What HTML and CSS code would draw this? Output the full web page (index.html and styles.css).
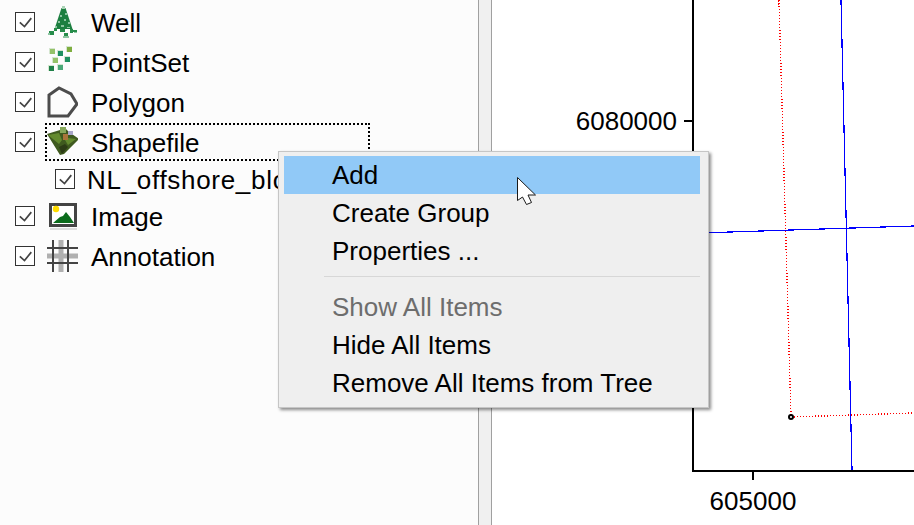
FILE: index.html
```html
<!DOCTYPE html>
<html lang="en">
<head>
<meta charset="utf-8">
<title>Tree context menu</title>
<link rel="stylesheet" href="styles.css">
</head>
<body>
<div class="app">
  <aside class="tree">
    <div class="row">
      <span class="check"><svg viewBox="0 0 20 20"><path d="M4.500 11l5.500 5 8-10"/></svg></span>
      <svg class="icon" viewBox="46 5 32 36">
        <path d="M61.500 8h4l7 21h-18z" fill="#1c7f40"/>
        <path d="M62 6h3v3h-3z" fill="#a9d3b5"/>
        <path d="M60 15h2v2h-2zM65 13h2v2h-2zM58 21h2v2h-2zM64 19h2v2h-2zM68 22h2v2h-2zM61 25h3v2h-3zM55 26h2v2h-2zM67 27h3v1h-3z" fill="#8cc5a0"/>
        <path d="M49 31h5v4h-5zM54 28h3v3h-3zM60 29h5v3h-5zM64 33h4v4h-4zM70 29h3v4h-3zM73 30h4v2h-4z" fill="#268c4a"/>
        <path d="M48 33h2v2h-2zM63 36h6v2h-6zM74 32h3v1h-3z" fill="#8cc5a0"/>
      </svg>
      <span class="label">Well</span>
    </div>
    <div class="row">
      <span class="check"><svg viewBox="0 0 20 20"><path d="M4.500 11l5.500 5 8-10"/></svg></span>
      <svg class="icon" viewBox="46 45 32 36">
        <path d="M49 48h6v6h-6zM66 46h6v6h-6zM52 57h6v6h-6zM57 50h6v6h-6zM64 56h6v6h-6zM48 65h6v6h-6zM57 64h6v6h-6z" fill="#d5e6d0"/>
        <path d="M50 49h5v5h-5zM53 58h5v5h-5z" fill="#95c268"/>
        <path d="M67 47h5v5h-5z" fill="#7fae3f"/>
        <path d="M58 51h5v5h-5zM65 57h5v5h-5z" fill="#1f9060"/>
        <path d="M49 66h5v5h-5z" fill="#1f8048"/>
        <path d="M58 65h5v5h-5z" fill="#4aa878"/>
      </svg>
      <span class="label">PointSet</span>
    </div>
    <div class="row">
      <span class="check"><svg viewBox="0 0 20 20"><path d="M4.500 11l5.500 5 8-10"/></svg></span>
      <svg class="icon" viewBox="46 85 32 36">
        <path d="M59 88L49 95v21h19l9-12-6-10z" fill="none" stroke="#4c4c4c" stroke-width="3"/>
      </svg>
      <span class="label">Polygon</span>
    </div>
    <div class="row">
      <span class="check"><svg viewBox="0 0 20 20"><path d="M4.500 11l5.500 5 8-10"/></svg></span>
      <svg class="icon" viewBox="46 125 32 36">
        <path d="M47 134l13-4 4-3 5 5 10 7-15 15-4 1z" fill="#3f5a1f"/>
        <path d="M48 135l11-2 3 7-3 4zM68 138l8 1-8 6-3-5z" fill="#638a2e"/>
        <path d="M59 147l6-3 3 3-6 7z" fill="#2c3c16"/>
        <path d="M60 127h6v6h-6z" fill="#86a85a"/>
        <path d="M63 134h5v6h-5z" fill="#a9743a"/>
        <path d="M68 131h5v4h-5z" fill="#a9a6c8"/>
      </svg>
      <span class="label">Shapefile</span>
      <span class="focus"></span>
    </div>
    <div class="row row-child">
      <span class="check"><svg viewBox="0 0 20 20"><path d="M4.500 11l5.500 5 8-10"/></svg></span>
      <span class="label">NL_offshore_blocks</span>
    </div>
    <div class="row">
      <span class="check"><svg viewBox="0 0 20 20"><path d="M4.500 11l5.500 5 8-10"/></svg></span>
      <svg class="icon" viewBox="46 199 32 36">
        <path d="M50 228h27v2H50z" fill="#ddd"/>
        <path d="M50.500 204.500h25v21h-25z" fill="#fff" stroke="#444" stroke-width="3"/>
        <circle cx="56" cy="209" r="3.200" fill="#ffdc00"/>
        <path d="M53 223l7-6 3-1 3-4 4 5 4 6z" fill="#0b6b1c"/>
      </svg>
      <span class="label">Image</span>
    </div>
    <div class="row">
      <span class="check"><svg viewBox="0 0 20 20"><path d="M4.500 11l5.500 5 8-10"/></svg></span>
      <svg class="icon" viewBox="46 239 32 36">
        <path d="M47 253.500h32v5H47zM58.500 240h5v32h-5z" fill="#b0b0b0"/>
        <path d="M47 247h32v2H47zM47 262h32v2H47zM52 240h2v32h-2zM67 240h2v32h-2z" fill="#444"/>
      </svg>
      <span class="label">Annotation</span>
    </div>
  </aside>
  <div class="splitter"></div>
  <main class="plot">
    <svg class="chart" viewBox="492 0 422 525">
      <path class="axis" d="M693 0V471H914M684 121H693M753 471V480"/>
      <path class="road" d="M841 0L852 470M700 233L914 226"/>
      <path class="block" d="M779 0L791 417L914 413"/>
      <circle cx="791" cy="417" r="2" fill="#fff" stroke="#000" stroke-width="2"/>
      <text class="tick" x="677" y="130" text-anchor="end">6080000</text>
      <text class="tick" x="753" y="510" text-anchor="middle">605000</text>
    </svg>
  </main>
  <nav class="menu">
    <div class="item item-active">Add</div>
    <div class="item">Create Group</div>
    <div class="item">Properties ...</div>
    <div class="sep"></div>
    <div class="item item-disabled">Show All Items</div>
    <div class="item">Hide All Items</div>
    <div class="item">Remove All Items from Tree</div>
  </nav>
  <svg class="cursor" viewBox="0 0 20 28"><path d="M.5.500V23.500L5.500 20l4 7.500 5-2-3.500-7.500h7.500z" fill="#fff" stroke="#1a1a1a" stroke-width="1"/></svg>
</div>
</body>
</html>
```
FILE: styles.css
```css
* { box-sizing: border-box; }
html, body { margin: 0; height: 100%; overflow: hidden; background: #fff; }
body { font-family: "Liberation Sans", Arial, sans-serif; font-size: 26px; color: #000; }
.app { position: relative; display: flex; width: 914px; height: 525px; overflow: hidden; }

.tree { width: 478px; flex: none; padding-top: 3px; background: #fcfcfc; }
.row { position: relative; display: flex; align-items: center; height: 40px; padding-left: 15px; white-space: nowrap; }
.row-child { height: 34px; padding-left: 55px; }
.check { display: block; flex: none; width: 20px; height: 20px; margin-top: -2px; border: 1.500px solid #333; background: #fff; }
.check svg { display: block; width: 17px; height: 17px; fill: none; stroke: #444; stroke-width: 2; }
.icon { flex: none; width: 32px; height: 36px; margin-left: 11px; margin-right: 13px; }
.label { line-height: 1; }
.row-child .label { margin-left: 12px; letter-spacing: .7px; }
.focus {
  position: absolute; left: 45px; top: 0; width: 325px; height: 38px;
  background:
    repeating-linear-gradient(90deg, #000 0 2px, transparent 2px 4px) 0 0 / 100% 2px no-repeat,
    repeating-linear-gradient(90deg, #000 0 2px, transparent 2px 4px) 0 100% / 100% 2px no-repeat,
    repeating-linear-gradient(0deg, #000 0 2px, transparent 2px 4px) 0 0 / 2px 100% no-repeat,
    repeating-linear-gradient(0deg, #000 0 2px, transparent 2px 4px) 100% 0 / 2px 100% no-repeat;
}

.splitter { width: 14px; flex: none; background: #f0f0f0; border-left: 1px solid #a0a0a0; border-right: 1px solid #a0a0a0; }
.plot { flex: 1; min-width: 0; background: #fff; }
.chart { display: block; width: 422px; height: 525px; }
.axis { fill: none; stroke: #000; stroke-width: 2; shape-rendering: crispEdges; }
.road { fill: none; stroke: #0000ff; stroke-width: 1.200; shape-rendering: crispEdges; }
.block { fill: none; stroke: #ff0000; stroke-width: 1.400; stroke-dasharray: 1.500 1.500; shape-rendering: crispEdges; }
.tick { font-family: "Liberation Sans", Arial, sans-serif; font-size: 26px; fill: #000; }

.menu {
  position: absolute; left: 278px; top: 151px; width: 431px; height: 257px;
  padding: 4px 8px 5px 5px; background: #efefef; border: 1px solid #c6c6c6;
  box-shadow: 2px 2px 3px rgba(0, 0, 0, .45);
}
.item { display: flex; align-items: center; height: 38px; padding-left: 48px; white-space: nowrap; }
.item-active { background: #91c9f7; }
.item-disabled { color: #6d6d6d; }
.sep { height: 18px; margin-left: 40px; padding-top: 6px; }
.sep::before { content: ""; display: block; height: 1px; background: #d7d7d7; }
.cursor { position: absolute; left: 517px; top: 177px; width: 20px; height: 28px; overflow: visible; }
```
